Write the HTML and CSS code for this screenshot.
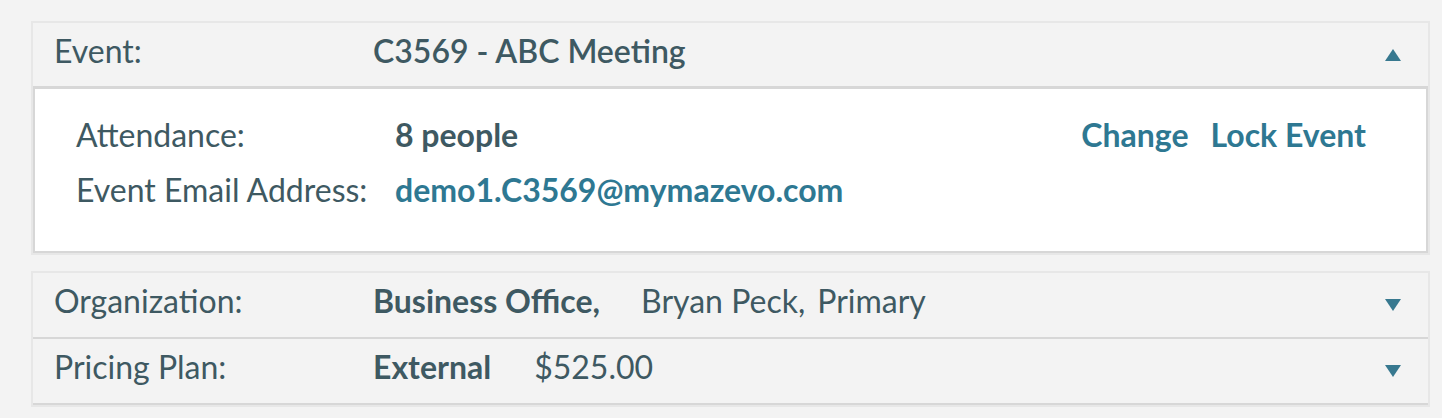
FILE: index.html
```html
<!DOCTYPE html>
<html lang="en">
<head>
<meta charset="utf-8">
<title>Event details</title>
<link rel="stylesheet" href="styles.css">
</head>
<body>
<div class="page">
  <section class="panel">
    <div class="row row-head">
      <span class="label">Event:</span>
      <span class="value value-title">C3569 - ABC Meeting</span>
      <span class="arrow arrow-up"></span>
    </div>
    <div class="body">
      <div class="body-line">
        <span class="label">Attendance:</span>
        <span class="value strong">8 people</span>
        <span class="actions">
          <a class="link" href="#">Change</a>
          <a class="link" href="#">Lock Event</a>
        </span>
      </div>
      <div class="body-line">
        <span class="label">Event Email Address:</span>
        <a class="value link" href="#">demo1.C3569@mymazevo.com</a>
      </div>
    </div>
  </section>

  <section class="panel">
    <div class="row">
      <span class="label">Organization:</span>
      <span class="value"><b class="strong">Business Office,</b><span class="sub">Bryan Peck,</span><span class="sub2">Primary</span></span>
      <span class="arrow arrow-down"></span>
    </div>
    <div class="row">
      <span class="label">Pricing Plan:</span>
      <span class="value"><b class="strong">External</b><span class="price">$525.00</span></span>
      <span class="arrow arrow-down"></span>
    </div>
  </section>
</div>
</body>
</html>
```

FILE: styles.css
```css
* { box-sizing: border-box; }

html, body {
  margin: 0;
  padding: 0;
  background: #f3f3f3;
}

body {
  font-family: Lato, "Open Sans", "Liberation Sans", sans-serif;
  font-size: 32px;
  color: #3e5962;
}

.page {
  padding: 21px 12px 0 31px;
  display: flex;
  flex-direction: column;
  gap: 16px;
}

.panel {
  border: 2px solid #e7e7e7;
  background: #f3f3f3;
}

.row {
  display: flex;
  align-items: center;
  height: 66px;
  padding: 0 27px 8px 21px;
  border-bottom: 2px solid #d7d7d7;
}

.row-head {
  height: 66px;
  border-bottom: 3px solid #d7d7d7;
}

.label {
  width: 319px;
  flex: none;
  line-height: 36px;
  white-space: nowrap;
}

.value {
  flex: 1;
  line-height: 36px;
  white-space: nowrap;
}

.value-title {
  font-weight: 600;
}

.strong {
  font-weight: 700;
}

.sub {
  margin-left: 41px;
}

.sub2 {
  margin-left: 12px;
}

.price {
  margin-left: 43px;
}

.arrow {
  flex: none;
  width: 0;
  height: 0;
  margin-top: 8px;
  border-left: 8px solid transparent;
  border-right: 8px solid transparent;
}

.arrow-up {
  border-bottom: 12px solid #37788f;
}

.arrow-down {
  border-top: 12px solid #37788f;
}

.body {
  background: #ffffff;
  border-left: 2px solid #d7d7d7;
  border-right: 2px solid #d7d7d7;
  border-bottom: 2px solid #d7d7d7;
  padding: 18px 60px 34px 41px;
}

.body-line {
  display: flex;
  align-items: center;
  height: 55px;
}

.body-line .label,
.body-line .value {
  line-height: 55px;
}

.link {
  color: #2e7892;
  font-weight: 700;
  text-decoration: none;
}

.actions {
  display: flex;
  gap: 22px;
  flex: none;
}
```
